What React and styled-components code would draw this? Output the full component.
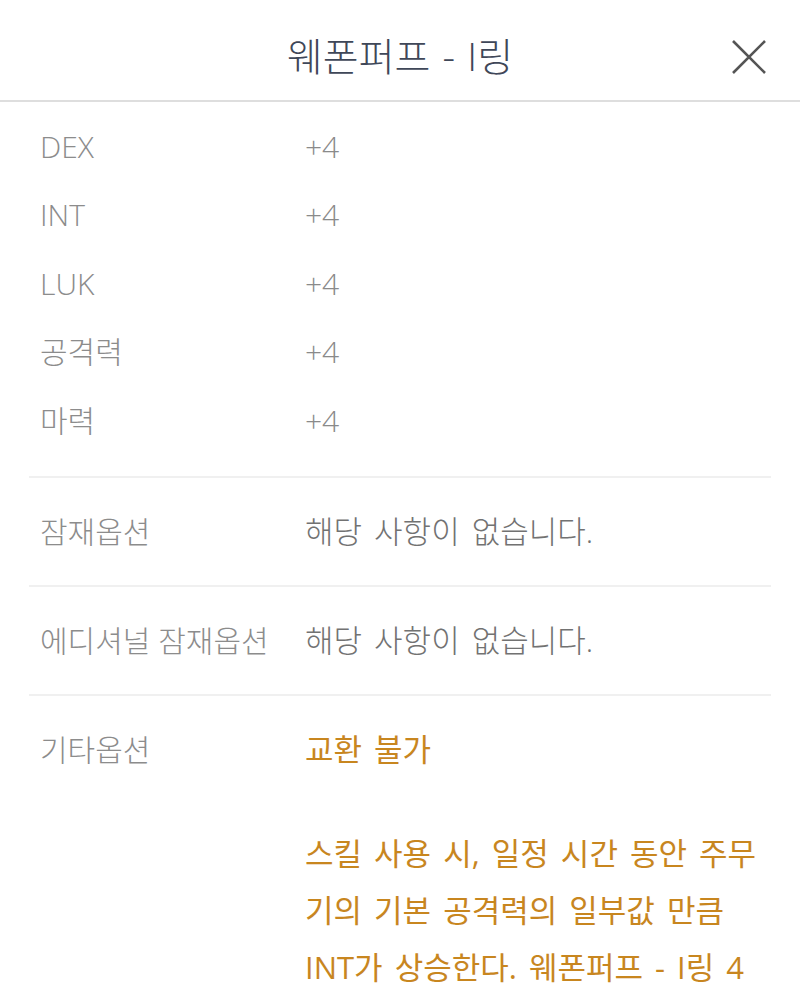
import React from 'react';
import styled, { createGlobalStyle } from 'styled-components';

const GlobalStyle = createGlobalStyle`
  html, body {
    margin: 0;
    padding: 0;
    background: #ffffff;
  }
  body {
    font-family: "Open Sans", "Noto Sans CJK KR", sans-serif;
  }
`;

const stats = [
  { label: 'DEX', value: '+4' },
  { label: 'INT', value: '+4' },
  { label: 'LUK', value: '+4' },
  { label: '공격력', value: '+4' },
  { label: '마력', value: '+4' },
];

function CloseIcon() {
  return (
    <svg width="36" height="36" viewBox="0 0 36 36" fill="none">
      <path d="M2 2L34 34M34 2L2 34" stroke="#555555" strokeWidth="2.6" />
    </svg>
  );
}

function App() {
  return (
    <Page>
      <GlobalStyle />
      <Header>
        <Title>웨폰퍼프 - I링</Title>
        <CloseButton aria-label="닫기">
          <CloseIcon />
        </CloseButton>
      </Header>
      <Body>
        <StatGroup>
          {stats.map((s) => (
            <StatRow key={s.label}>
              <Label>{s.label}</Label>
              <StatValue>{s.value}</StatValue>
            </StatRow>
          ))}
        </StatGroup>
        <Section>
          <Label>잠재옵션</Label>
          <Value>해당 사항이 없습니다.</Value>
        </Section>
        <Section>
          <Label>에디셔널 잠재옵션</Label>
          <Value>해당 사항이 없습니다.</Value>
        </Section>
        <Section last>
          <Label>기타옵션</Label>
          <div>
            <Value accent>교환 불가</Value>
            <Value accent spaced>
              스킬 사용 시, 일정 시간 동안 주무기의 기본 공격력의 일부값 만큼 INT가 상승한다. 웨폰퍼프 - I링 4
            </Value>
          </div>
        </Section>
      </Body>
    </Page>
  );
}

const Page = styled.div`
  width: 800px;
  height: 983px;
  overflow: hidden;
  background: #ffffff;
`;

const Header = styled.header`
  position: relative;
  height: 102px;
  box-sizing: border-box;
  padding-top: 8px;
  display: flex;
  align-items: center;
  justify-content: center;
  border-bottom: 2px solid #dedede;
`;

const Title = styled.h1`
  margin: 0;
  font-size: 39px;
  font-weight: 300;
  color: #3f4758;
  word-spacing: 2px;
`;

const CloseButton = styled.button`
  position: absolute;
  right: 33px;
  top: 39px;
  padding: 0;
  border: none;
  background: none;
  display: flex;
`;

const Body = styled.div`
  padding: 0 29px;
`;

const StatGroup = styled.div`
  padding: 10px 0 21px;
  border-bottom: 2px solid #f0f0f0;
`;

const StatRow = styled.div`
  display: grid;
  grid-template-columns: 265px 1fr;
  height: 68.5px;
  align-items: center;
  padding-left: 11px;
`;

const Label = styled.div`
  font-size: 30px;
  line-height: 57px;
  color: #8c8c8c;
  font-weight: 300;
  white-space: nowrap;
`;

const StatValue = styled.div`
  font-size: 30px;
  color: #8a8a8a;
  font-weight: 300;
`;

const Section = styled.div`
  display: grid;
  grid-template-columns: 265px 1fr;
  padding: 25px 0 25px 11px;
  border-bottom: ${(p) => (p.last ? 'none' : '2px solid #f0f0f0')};
`;

const Value = styled.p`
  margin: ${(p) => (p.spaced ? '47px 0 0' : '0')};
  font-size: 31px;
  line-height: 57px;
  word-spacing: 4px;
  font-weight: ${(p) => (p.accent ? 400 : 300)};
  color: ${(p) => (p.accent ? '#c8861f' : '#727272')};
`;

export default App;
